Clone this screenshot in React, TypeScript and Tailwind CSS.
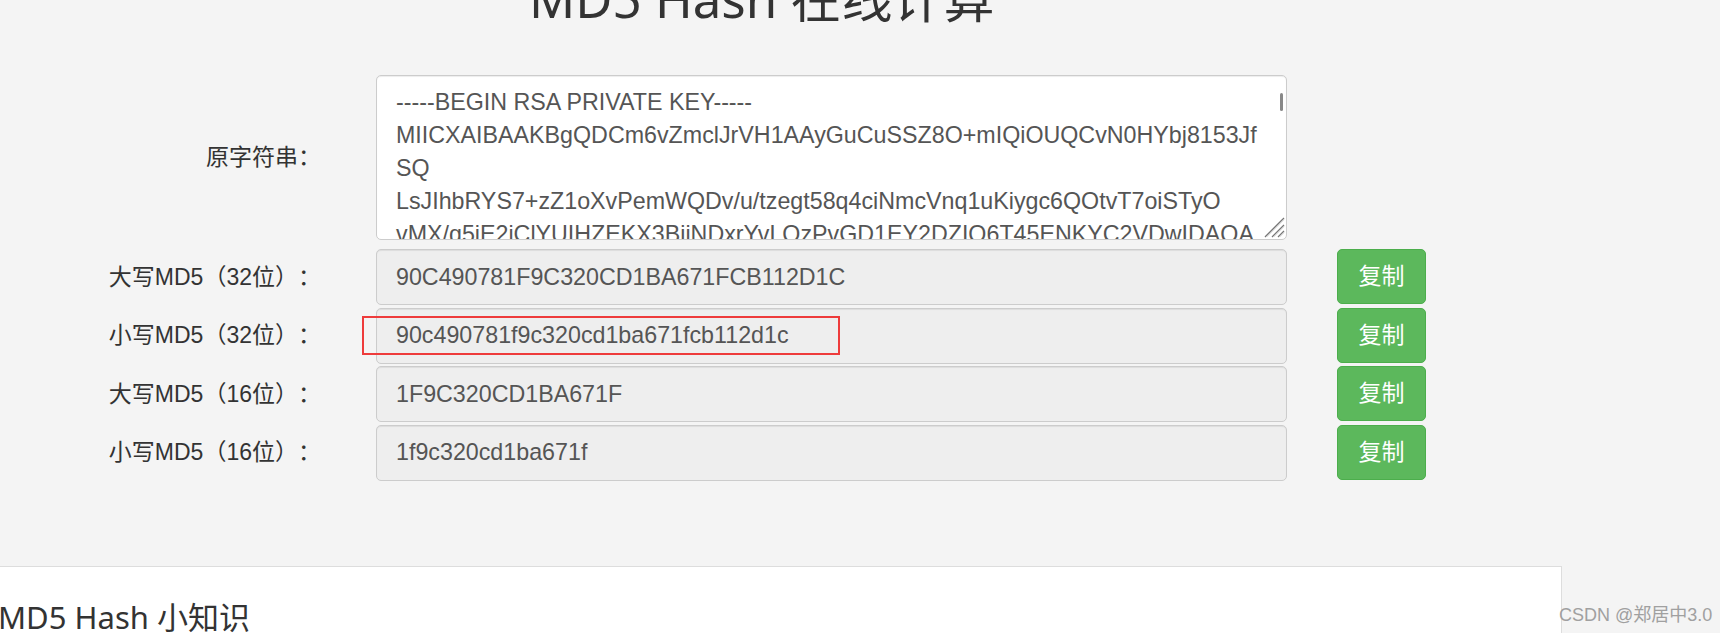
const keyText = [
  "-----BEGIN RSA PRIVATE KEY-----",
  "MIICXAIBAAKBgQDCm6vZmclJrVH1AAyGuCuSSZ8O+mIQiOUQCvN0HYbj8153Jf",
  "SQ",
  "LsJIhbRYS7+zZ1oXvPemWQDv/u/tzegt58q4ciNmcVnq1uKiygc6QOtvT7oiSTyO",
  "vMX/q5iE2iClYUIHZEKX3BiiNDxrYvLQzPvGD1EY2DZIQ6T45ENKYC2VDwIDAQA",
  "B",
  "AoGAPZ4ZkzyH8pX0lB3oN5j2VrYq1aW8cTn6Ee3sFm9uGdKhL7tQxJb4Rw0Oi",
  "-----END RSA PRIVATE KEY-----",
].join("\n");

const results = [
  { label: "大写MD5（32位）：", value: "90C490781F9C320CD1BA671FCB112D1C" },
  { label: "小写MD5（32位）：", value: "90c490781f9c320cd1ba671fcb112d1c", marked: true },
  { label: "大写MD5（16位）：", value: "1F9C320CD1BA671F" },
  { label: "小写MD5（16位）：", value: "1f9c320cd1ba671f" },
];

function ResultRow({ label, value, marked }: { label: string; value: string; marked?: boolean }) {
  return (
    <div className="flex h-[56px]">
      <label className="flex w-[321px] items-center justify-end text-[23px] text-[#333] [text-spacing-trim:space-all]">
        {label}
      </label>
      <div className="relative ml-[55px] w-[911px]">
        <input
          readOnly
          value={value}
          className="h-full w-full rounded-[5px] border border-[#ccc] bg-[#eee] pl-[19px] text-[23.25px] text-[#555] shadow-[inset_0_1px_1px_rgba(0,0,0,0.075)] outline-none"
        />
        {marked && (
          <span className="pointer-events-none absolute left-[-14px] top-[8px] h-[39px] w-[478px] border-2 border-[#ee3b3b]" />
        )}
      </div>
      <button
        type="button"
        className="ml-[50px] flex h-[55px] w-[89px] items-center justify-center rounded-[5px] border border-[#4cae4c] bg-[#5cb85c] text-[23px] text-white"
      >
        复制
      </button>
    </div>
  );
}

export default function App() {
  return (
    <div className="relative h-[633px] overflow-hidden bg-[#f4f4f4] font-['Liberation_Sans','Noto_Sans_CJK_SC',sans-serif] text-[#333]">
      <h1 className="-mt-[27px] pl-[529px] font-['Noto_Sans','Noto_Sans_CJK_SC',sans-serif] text-[51px] font-normal leading-[51px] text-[#333]">
        MD5 Hash 在线计算
      </h1>

      <form className="mt-[51px] flex flex-col">
        <div className="flex items-center">
          <label className="w-[321px] text-right text-[23px] text-[#333] [text-spacing-trim:space-all]">原字符串：</label>
          <div className="relative ml-[55px] h-[165px] w-[911px]">
            <textarea
              readOnly
              value={keyText}
              className="h-full w-full resize-none overflow-hidden whitespace-pre rounded-[5px] border border-[#ccc] bg-white px-[19px] pt-[10px] text-[23.25px] leading-[33px] text-[#555] shadow-[inset_0_1px_1px_rgba(0,0,0,0.075)] outline-none"
            />
            <span className="absolute right-[4px] top-[18px] h-[18px] w-[3px] rounded-full bg-[#888]" />
            <svg className="absolute bottom-[2px] right-[2px]" width="22" height="22" viewBox="0 0 22 22">
              <path d="M2 21 L21 2" stroke="#777" strokeWidth="1.3" />
              <path d="M3.5 21 L21 3.5" stroke="#ccc" strokeWidth="1" />
              <path d="M9 21 L21 9" stroke="#777" strokeWidth="1.3" />
              <path d="M10.5 21 L21 10.5" stroke="#ccc" strokeWidth="1" />
              <path d="M15 21 L21 15" stroke="#777" strokeWidth="1.3" />
              <path d="M16.5 21 L21 16.5" stroke="#ccc" strokeWidth="1" />
            </svg>
          </div>
        </div>

        <div className="mt-[9px] flex flex-col gap-[2.5px]">
          {results.map((r) => (
            <ResultRow key={r.label} {...r} />
          ))}
        </div>
      </form>

      <section className="mt-[85px] h-[200px] w-[1562px] border-r border-t border-[#ddd] bg-white pt-[35px]">
        <h2 className="-ml-[2px] font-['Noto_Sans','Noto_Sans_CJK_SC',sans-serif] text-[31px] font-normal leading-[31px] text-[#333]">
          MD5 Hash 小知识
        </h2>
      </section>

      <span className="absolute left-[1559px] top-[605px] text-[18px] leading-[20px] text-[#a0a0a0]">
        CSDN @郑居中3.0
      </span>
    </div>
  );
}
